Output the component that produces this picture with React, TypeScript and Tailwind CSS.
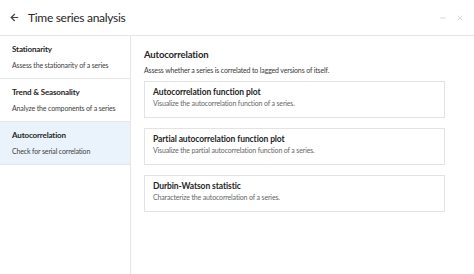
import { ArrowLeft, Minus, X } from 'lucide-react'

const navItems = [
  { title: 'Stationarity', desc: 'Assess the stationarity of a series' },
  { title: 'Trend & Seasonality', desc: 'Analyze the components of a series' },
  { title: 'Autocorrelation', desc: 'Check for serial correlation', active: true },
]

const cards = [
  { title: 'Autocorrelation function plot', desc: 'Visualize the autocorrelation function of a series.' },
  { title: 'Partial autocorrelation function plot', desc: 'Visualize the partial autocorrelation function of a series.' },
  { title: 'Durbin-Watson statistic', desc: 'Characterize the autocorrelation of a series.' },
]

export default function App() {
  return (
    <div className="w-[474px] h-[274px] bg-white flex flex-col text-[#262626] font-['Lato',sans-serif] overflow-hidden whitespace-nowrap">
      <div className="h-[36px] shrink-0 flex items-center border-b border-[#e6e6e6] pl-[9px] pr-[10px]">
        <ArrowLeft size={11} strokeWidth={2.6} className="text-[#444]" />
        <span className="ml-[8px] text-[12px] tracking-[-0.3px] text-[#262626]">Time series analysis</span>
        <div className="ml-auto flex items-center gap-[9px] text-[#c4c4c4]">
          <Minus size={8} strokeWidth={2} />
          <X size={8} strokeWidth={2} />
        </div>
      </div>
      <div className="flex flex-1 min-h-0">
        <div className="w-[131px] shrink-0 border-r border-[#e6e6e6] flex flex-col">
          {navItems.map((item) => (
            <div
              key={item.title}
              className={`h-[43px] px-[12px] pt-[8px] border-b border-[#e6e6e6] ${item.active ? 'bg-[#eaf3fc]' : ''}`}
            >
              <div className="text-[8px] font-bold tracking-[-0.15px] text-[#262626] leading-[10px]">{item.title}</div>
              <div className="text-[7px] tracking-[-0.15px] text-[#404040] leading-[9px] mt-[7px]">{item.desc}</div>
            </div>
          ))}
        </div>
        <div className="flex-1 pl-[13px] pr-[29px] pt-[12px]">
          <div className="text-[9.5px] font-bold tracking-[-0.15px] leading-[13px]">Autocorrelation</div>
          <div className="text-[7px] tracking-[-0.15px] text-[#3a3a3a] leading-[9px] mt-[5px]">
            Assess whether a series is correlated to lagged versions of itself.
          </div>
          <div className="flex flex-col gap-[10px] mt-[6px]">
            {cards.map((c) => (
              <div key={c.title} className="h-[37px] border border-[#e3e3e3] px-[8px] pt-[5px]">
                <div className="text-[8.5px] font-bold tracking-[-0.1px] leading-[11px]">{c.title}</div>
                <div className="text-[7px] tracking-[-0.15px] text-[#666] leading-[9px] mt-[1px]">{c.desc}</div>
              </div>
            ))}
          </div>
        </div>
      </div>
    </div>
  )
}
